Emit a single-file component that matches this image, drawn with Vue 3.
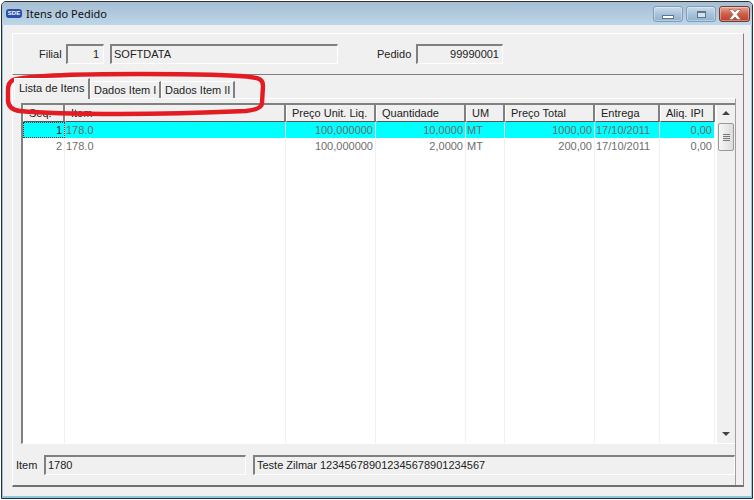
<template>
  <div class="window">
    <div class="titlebar">
      <span class="app-icon">SDE</span>
      <span class="title">Itens do Pedido</span>
      <div class="controls">
        <button class="ctl"><i class="min-glyph"></i></button>
        <button class="ctl"><i class="max-glyph"></i></button>
        <button class="ctl close">
          <svg width="16" height="11" viewBox="0 0 16 11">
            <path d="M2 .5h3.6L8 3l2.400-2.500H14L10 5.500l4 5h-3.600L8 8l-2.400 2.500H2l4-5z" fill="#fff" stroke="#7a3a2e" stroke-width=".5" />
          </svg>
        </button>
      </div>
    </div>
    <div class="client">
      <div class="header-panel">
        <span class="lbl filial-lbl">Filial</span>
        <span class="field filial-num">1</span>
        <span class="field filial-name">SOFTDATA</span>
        <span class="lbl pedido-lbl">Pedido</span>
        <span class="field pedido-num">99990001</span>
      </div>
      <div class="body-panel">
        <div class="tabs">
          <div
            v-for="(t, i) in tabs"
            :key="t.label"
            :class="['tab', { active: i === 0 }]"
            :style="{ width: t.w + 'px' }"
          >{{ t.label }}</div>
        </div>
        <div class="page">
          <div class="grid-box">
            <div class="grid">
              <div class="grid-head">
                <div v-for="c in columns" :key="c.label" class="head-cell" :style="{ width: c.w + 'px' }">{{ c.label }}</div>
              </div>
              <div class="grid-rows">
                <div v-for="(r, i) in rows" :key="i" class="row">
                  <div
                    v-for="(c, j) in columns"
                    :key="c.label"
                    :class="['cell', { right: c.right, focus: i === 0 && j === 0, selected: i === 0 }]"
                    :style="{ width: c.w + 'px' }"
                  >{{ r[j] }}</div>
                </div>
                <div class="filler">
                  <div v-for="c in columns" :key="c.label" class="fill-col" :style="{ width: c.w + 'px' }"></div>
                </div>
              </div>
            </div>
            <div class="scrollbar">
              <div class="arrow up"></div>
              <div class="thumb"><i></i><i></i><i></i><i></i></div>
              <div class="track"></div>
              <div class="arrow down"></div>
            </div>
          </div>
          <div class="footer">
            <span class="lbl item-lbl">Item</span>
            <span class="field item-code">1780</span>
            <span class="field item-desc">Teste Zilmar 123456789012345678901234567</span>
          </div>
        </div>
      </div>
    </div>
    <!-- hand-drawn annotation over the tabs -->
    <svg class="marker" width="754" height="130" viewBox="0 0 754 130">
      <path
        d="M13 80C25 76 70 74 140 74 190 74 235 75 250 77 260 78 263 80 263 86L262 103C262 108 256 110 246 111 200 113 170 114 120 114 80 114 40 113 20 111 11 110 8 106 8 100L8 90C8 85 9 82 13 80Z"
        fill="none"
        stroke="#e31b23"
        stroke-width="4.4"
      />
    </svg>
  </div>
</template>

<script setup>
const tabs = [
  { label: 'Lista de Itens', w: 76 },
  { label: 'Dados Item I', w: 71 },
  { label: 'Dados Item II', w: 74 },
]

const columns = [
  { label: 'Seq.', w: 42, right: true },
  { label: 'Item', w: 221 },
  { label: 'Preço Unit. Liq.', w: 90, right: true },
  { label: 'Quantidade', w: 90, right: true },
  { label: 'UM', w: 39 },
  { label: 'Preço Total', w: 90, right: true },
  { label: 'Entrega', w: 65 },
  { label: 'Aliq. IPI', w: 55, right: true },
]

const rows = [
  ['1', '178.0', '100,000000', '10,0000', 'MT', '1000,00', '17/10/2011', '0,00'],
  ['2', '178.0', '100,000000', '2,0000', 'MT', '200,00', '17/10/2011', '0,00'],
]
</script>

<style>
html, body {
  margin: 0;
  background: #fff;
}
</style>

<style scoped>
.window {
  position: relative;
  width: 752px;
  height: 498px;
  margin: 1px 0 0 1px;
  border: 1px solid #2b2f33;
  border-radius: 5px 5px 0 0;
  box-sizing: border-box;
  background: #8ec8e0;
  display: flex;
  flex-direction: column;
  font-family: "Liberation Sans", Arial, sans-serif;
  font-size: 11px;
  color: #222;
}
.titlebar {
  height: 23px;
  display: flex;
  align-items: center;
  padding: 0 2px 0 4px;
  background: linear-gradient(#a6bdd2, #bcd6ea);
  border-radius: 4px 4px 0 0;
  flex-shrink: 0;
}
.app-icon {
  width: 16px;
  height: 9px;
  margin-right: 4px;
  border-radius: 3px;
  background: #2a4fa8;
  color: #fff;
  font-size: 6px;
  font-weight: bold;
  line-height: 9px;
  text-align: center;
}
.title {
  font-family: "Noto Sans", sans-serif;
  font-size: 11px;
  color: #111;
}
.controls {
  margin-left: auto;
  display: flex;
  gap: 3px;
  align-self: flex-start;
  margin-top: 4px;
}
.ctl {
  width: 30px;
  height: 16px;
  padding: 0;
  border: 1px solid #7f9cb8;
  border-radius: 3px;
  background: linear-gradient(#c9dbea, #a9c3da 50%, #93b1cc);
  box-shadow: inset 0 0 0 1px rgba(255, 255, 255, 0.35);
  display: flex;
  align-items: center;
  justify-content: center;
}
.ctl.close {
  width: 31px;
  border-color: #7a3a2e;
  background: linear-gradient(#e6a797, #cf5f4a 50%, #b8402e);
}
.min-glyph {
  width: 10px;
  height: 2px;
  margin-top: 5px;
  background: #fff;
  border: 1px solid #5d7690;
}
.max-glyph {
  width: 7px;
  height: 4px;
  border: 1px solid #5f778e;
  border-top-width: 2px;
  background: #d5e3ef;
}
.client {
  flex: 1;
  margin: 0 1px 2px 1px;
  padding: 8px 7px 9px 9px;
  background: #f0f0f0;
  display: flex;
  flex-direction: column;
  min-height: 0;
}
.header-panel {
  height: 42px;
  box-sizing: border-box;
  border: 1px solid;
  border-color: #fff #808080 #808080 #fff;
  display: flex;
  align-items: center;
  flex-shrink: 0;
}
.filial-lbl {
  width: 53px;
  padding-left: 26px;
  box-sizing: border-box;
}
.field {
  box-sizing: border-box;
  height: 20px;
  line-height: 16px;
  padding: 0 3px 0 2px;
  border: 1px solid;
  border-color: #808080 #fff #fff #808080;
  border-top-width: 2px;
  border-left-width: 2px;
  background: #f0f0f0;
  white-space: nowrap;
  overflow: hidden;
}
.filial-num {
  width: 38px;
  text-align: right;
  padding-right: 4px;
}
.filial-name {
  width: 228px;
  margin-left: 6px;
}
.pedido-lbl {
  width: 78px;
  padding-left: 39px;
  box-sizing: border-box;
}
.pedido-num {
  width: 87px;
  text-align: right;
}
.body-panel {
  flex: 1;
  display: flex;
  flex-direction: column;
  min-height: 0;
  padding: 3px 7px 0 3px;
  border-right: 1px solid #808080;
  border-bottom: 2px solid #707070;
  border-left: 1px solid #fff;
}
.tabs {
  display: flex;
  height: 20px;
  flex-shrink: 0;
  margin-left: -2px;
}
.tab {
  margin-top: 3px;
  height: 17px;
  box-sizing: border-box;
  padding-left: 3px;
  border-right: 2px solid #808080;
  border-left: 1px solid #fff;
  border-top: 1px solid #fff;
  line-height: 16px;
  white-space: nowrap;
}
.tab.active {
  margin-top: 0;
  height: 21px;
  padding-left: 4px;
  line-height: 18px;
  position: relative;
  z-index: 1;
  background: #f0f0f0;
}
.page {
  flex: 1;
  display: flex;
  flex-direction: column;
  min-height: 0;
  border-top: 1px solid #fff;
  border-right: 1px solid #a0a0a0;
  padding-top: 4px;
}
.grid-box {
  height: 341px;
  margin-left: 5px;
  display: flex;
  flex-shrink: 0;
  box-sizing: border-box;
  border-top: 2px solid #808080;
  border-left: 2px solid #808080;
  border-bottom: 1px solid #fff;
}
.grid {
  flex: 1;
  display: flex;
  flex-direction: column;
  min-width: 0;
  background: #fff;
}
.grid-head {
  display: flex;
  height: 17px;
  box-sizing: border-box;
  flex-shrink: 0;
}
.head-cell {
  box-sizing: border-box;
  padding: 1px 0 0 5px;
  border-right: 2px solid #808080;
  border-bottom: 1px solid #555;
  border-left: 1px solid #fff;
  background: #f0f0f0;
  line-height: 15px;
  white-space: nowrap;
  overflow: hidden;
}
.grid-rows {
  flex: 1;
  display: flex;
  flex-direction: column;
  min-height: 0;
}
.row {
  display: flex;
  height: 16px;
  flex-shrink: 0;
}
.cell {
  box-sizing: border-box;
  padding: 0 2px 0 1px;
  border-right: 1px solid #f0f0f0;
  color: #6e6e6e;
  line-height: 16px;
  white-space: nowrap;
  overflow: hidden;
}
.cell.selected {
  background: #00ffff;
}
.cell.right {
  text-align: right;
}
.cell.focus {
  color: #222;
  outline: 1px dotted #333;
  outline-offset: -1px;
}
.filler {
  flex: 1;
  display: flex;
}
.fill-col {
  box-sizing: border-box;
  border-right: 1px solid #f0f0f0;
}
.scrollbar {
  width: 18px;
  flex-shrink: 0;
  display: flex;
  flex-direction: column;
  align-items: center;
  background: #f0f0f0;
}
.arrow {
  height: 18px;
  width: 100%;
  position: relative;
  flex-shrink: 0;
}
.arrow::after {
  content: "";
  position: absolute;
  left: 5px;
  top: 6px;
  border: 4px solid transparent;
  border-top: 0;
  border-bottom-color: #444;
}
.arrow.down::after {
  top: 7px;
  border-bottom: 0;
  border-top: 4px solid #444;
}
.thumb {
  width: 16px;
  height: 28px;
  flex-shrink: 0;
  box-sizing: border-box;
  border: 1px solid #9a9a9a;
  border-radius: 2px;
  background: linear-gradient(90deg, #f6f6f6, #dcdcdc);
  display: flex;
  flex-direction: column;
  align-items: center;
  justify-content: center;
  gap: 1px;
}
.thumb i {
  width: 7px;
  height: 1px;
  background: #777;
}
.track {
  flex: 1;
}
.footer {
  flex: 1;
  display: flex;
  align-items: center;
}
.item-lbl {
  width: 28px;
}
.item-code {
  width: 202px;
}
.item-desc {
  flex: 1;
  margin-left: 7px;
}
.marker {
  position: absolute;
  left: -2px;
  top: -2px;
  pointer-events: none;
}
</style>
